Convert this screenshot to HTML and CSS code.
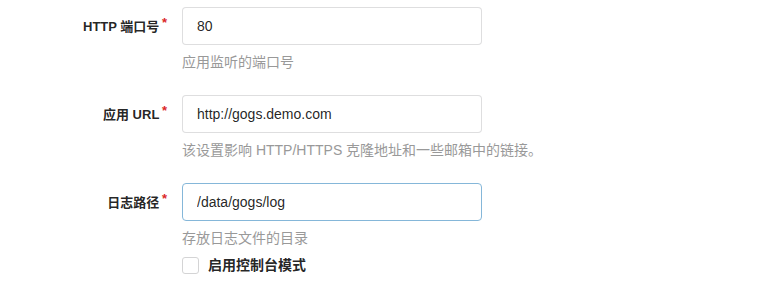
FILE: index.html
```html
<!DOCTYPE html>
<html lang="zh">
<head>
<meta charset="utf-8">
<title>Gogs install</title>
<link rel="stylesheet" href="styles.css">
</head>
<body>
<form class="form">
  <div class="field">
    <div class="row">
      <label class="label required">HTTP 端口号</label>
      <input class="input" type="text" value="80">
    </div>
    <div class="help">应用监听的端口号</div>
  </div>
  <div class="field">
    <div class="row">
      <label class="label required">应用 URL</label>
      <input class="input" type="text" value="http://gogs.demo.com">
    </div>
    <div class="help">该设置影响 HTTP/HTTPS 克隆地址和一些邮箱中的链接。</div>
  </div>
  <div class="field">
    <div class="row">
      <label class="label required">日志路径</label>
      <input class="input focus" type="text" value="/data/gogs/log">
    </div>
    <div class="help">存放日志文件的目录</div>
    <div class="check">
      <span class="box"></span>
      <span class="check-label">启用控制台模式</span>
    </div>
  </div>
</form>
</body>
</html>
```

FILE: styles.css
```css
html, body {
  margin: 0;
  padding: 0;
  background: #ffffff;
}
body {
  font-family: "Liberation Sans", "Noto Sans CJK SC", sans-serif;
  font-size: 14px;
  color: rgba(0, 0, 0, 0.87);
}
.form {
  display: flex;
  flex-direction: column;
  padding-top: 7px;
}
.field {
  display: flex;
  flex-direction: column;
  margin-bottom: 23px;
}
.row {
  display: flex;
  align-items: center;
}
.label {
  width: 167px;
  margin-right: 15px;
  margin-top: -2px;
  text-align: right;
  font-size: 13px;
  font-weight: bold;
  color: rgba(0, 0, 0, 0.87);
}
.required::after {
  content: "*";
  color: #db2828;
  margin-left: 0.2em;
  position: relative;
  top: -0.3em;
}
.input {
  box-sizing: border-box;
  width: 300px;
  height: 38px;
  margin: 0;
  padding: 0 14px;
  border: 1px solid rgba(34, 36, 38, 0.15);
  border-radius: 4px;
  font-family: "Liberation Sans", "Noto Sans CJK SC", sans-serif;
  font-size: 14px;
  color: rgba(0, 0, 0, 0.87);
  background: #ffffff;
  outline: none;
}
.input.focus {
  border-color: #85b7d9;
}
.help {
  margin-left: 182px;
  margin-top: 7px;
  line-height: 20px;
  color: #999999;
}
.check {
  margin-left: 182px;
  margin-top: 9px;
  display: flex;
  align-items: center;
}
.box {
  box-sizing: border-box;
  width: 17px;
  height: 17px;
  border: 1px solid #d4d4d5;
  border-radius: 3px;
  background: #ffffff;
}
.check-label {
  margin-left: 9px;
  font-weight: bold;
  font-size: 14px;
  line-height: 17px;
  color: rgba(0, 0, 0, 0.87);
}
```
